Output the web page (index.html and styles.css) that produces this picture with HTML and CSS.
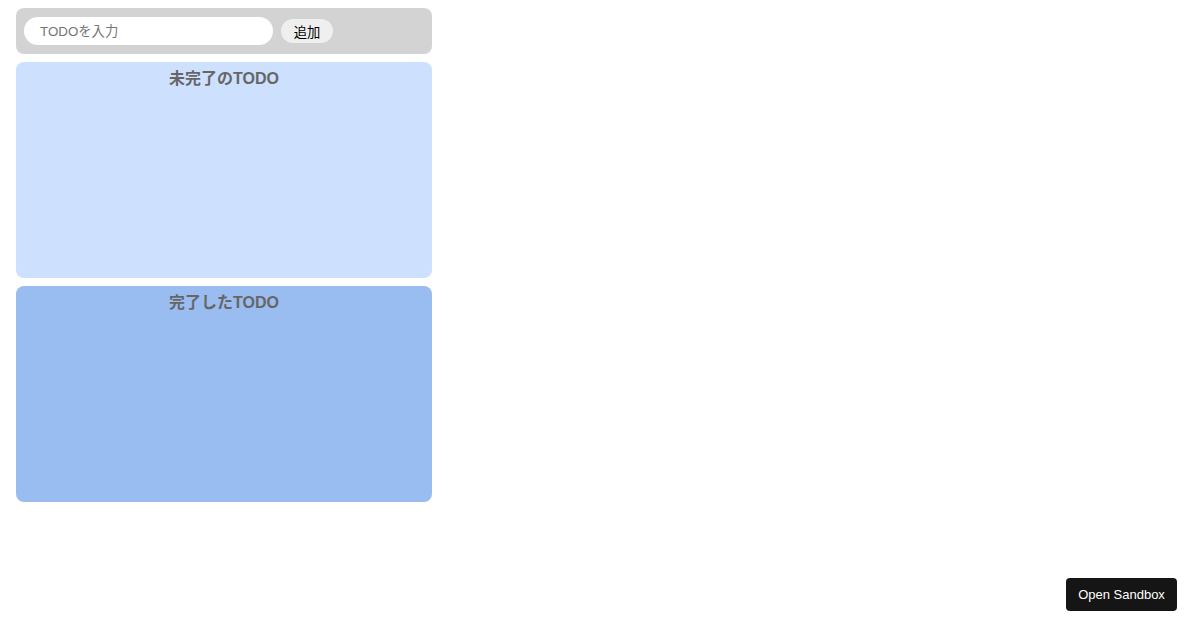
FILE: index.html
```html
<!DOCTYPE html>
<html lang="ja">
<head>
<meta charset="utf-8">
<title>TODO</title>
<link rel="stylesheet" href="styles.css">
</head>
<body>
  <div class="input-area">
    <input class="todo-input" type="text" placeholder="TODOを入力">
    <button class="add-button">追加</button>
  </div>
  <div class="incomplete-area">
    <p class="title">未完了のTODO</p>
    <ul class="list"></ul>
  </div>
  <div class="complete-area">
    <p class="title">完了したTODO</p>
    <ul class="list"></ul>
  </div>
  <a class="sandbox-button">Open Sandbox</a>
</body>
</html>
```
FILE: styles.css
```css
body {
  margin: 0 8px;
  padding: 0;
  font-family: "Liberation Sans", Arial, "Noto Sans CJK JP", sans-serif;
  background: #ffffff;
}

.input-area {
  background-color: #d3d3d3;
  width: 400px;
  height: 30px;
  padding: 8px;
  margin: 8px;
  border-radius: 8px;
  display: flex;
  align-items: center;
  gap: 8px;
}

.todo-input {
  box-sizing: border-box;
  width: 249px;
  height: 28px;
  border: none;
  border-radius: 16px;
  padding: 6px 16px;
  outline: none;
  font-family: "Liberation Sans", Arial, "Noto Sans CJK JP", sans-serif;
  font-size: 13.33px;
  background: #ffffff;
}

.todo-input::placeholder {
  color: #757575;
}

.add-button {
  box-sizing: border-box;
  width: 52px;
  height: 24px;
  border: none;
  border-radius: 16px;
  padding: 0;
  background-color: #efefef;
  color: #000000;
  font-family: "Liberation Sans", Arial, "Noto Sans CJK JP", sans-serif;
  font-size: 13.33px;
}

.incomplete-area,
.complete-area {
  width: 400px;
  min-height: 200px;
  padding: 8px;
  margin: 8px;
  border-radius: 8px;
}

.incomplete-area {
  background-color: #cde0fd;
}

.complete-area {
  background-color: #9abdf1;
}

.title {
  text-align: center;
  margin: 0;
  font-weight: bold;
  font-size: 16px;
  line-height: 18px;
  color: #666666;
}

.list {
  padding-left: 0;
  list-style: none;
}

.sandbox-button {
  position: fixed;
  right: 23px;
  bottom: 19px;
  box-sizing: border-box;
  width: 111px;
  height: 33px;
  display: flex;
  align-items: center;
  justify-content: center;
  background: #151515;
  color: #ffffff;
  border-radius: 4px;
  font-family: "Liberation Sans", Arial, sans-serif;
  font-size: 13px;
}
```
